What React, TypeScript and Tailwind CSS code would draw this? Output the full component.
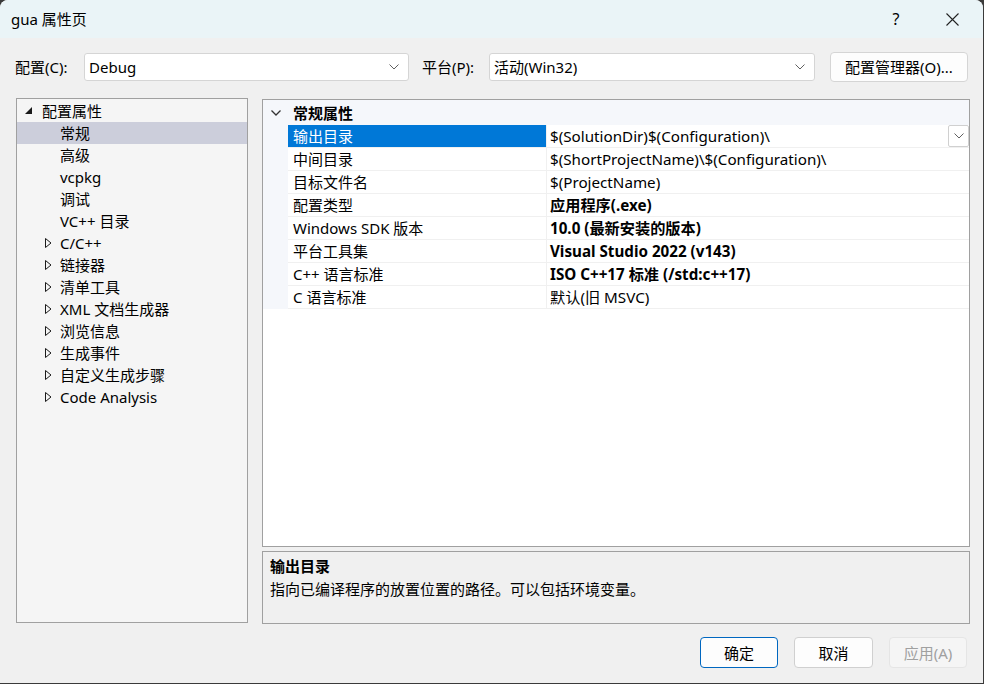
import { useState } from "react";

const font = { fontFamily: '"Noto Sans", "Noto Sans CJK SC", sans-serif' };

const Chevron = ({ className = "" }: { className?: string }) => (
  <svg width="10" height="6" viewBox="0 0 10 6" className={className}>
    <path d="M0.5 0.5 L5 5 L9.5 0.5" fill="none" stroke="#606060" strokeWidth="1" />
  </svg>
);

const treeChildren = ["常规", "高级", "vcpkg", "调试", "VC++ 目录"];
const treeCollapsed = [
  "C/C++",
  "链接器",
  "清单工具",
  "XML 文档生成器",
  "浏览信息",
  "生成事件",
  "自定义生成步骤",
  "Code Analysis",
];

const props: { name: string; value: string; bold?: boolean }[] = [
  { name: "输出目录", value: "$(SolutionDir)$(Configuration)\\" },
  { name: "中间目录", value: "$(ShortProjectName)\\$(Configuration)\\" },
  { name: "目标文件名", value: "$(ProjectName)" },
  { name: "配置类型", value: "应用程序(.exe)", bold: true },
  { name: "Windows SDK 版本", value: "10.0 (最新安装的版本)", bold: true },
  { name: "平台工具集", value: "Visual Studio 2022 (v143)", bold: true },
  { name: "C++ 语言标准", value: "ISO C++17 标准 (/std:c++17)", bold: true },
  { name: "C 语言标准", value: "默认(旧 MSVC)" },
];

function Select({ value, width }: { value: string; width: string }) {
  return (
    <div
      className={`${width} h-[28px] bg-white border border-[#d5d5d5] rounded-[3px] flex items-center justify-between pl-[4px] pr-[9px]`}
    >
      <span className="text-[15px] text-black">{value}</span>
      <Chevron />
    </div>
  );
}

export default function App() {
  const [selectedTree] = useState("常规");
  const [selectedProp] = useState(0);

  return (
    <div className="w-[984px] h-[684px] bg-[#3a3a3a]" style={font}>
      <div className="w-[983px] h-[683px] bg-[#f0f0f0] rounded-tl-[8px] rounded-tr-[8px] overflow-hidden flex flex-col text-[15px] text-black leading-[20px]">
        {/* title bar */}
        <div className="h-[38px] bg-[#eaf4f7] flex items-center pl-[11px] shrink-0">
          <span className="flex-1">gua 属性页</span>
          <span className="w-[56px] text-center text-[16px]">?</span>
          <span className="w-[56px] flex justify-center mr-[3px]">
            <svg width="13" height="13" viewBox="0 0 13 13">
              <path d="M0.5 0.5 L12.5 12.5 M12.5 0.5 L0.5 12.5" stroke="#222" strokeWidth="1.1" />
            </svg>
          </span>
        </div>

        {/* config row */}
        <div className="flex items-center mt-[14px] h-[30px] pl-[15px]">
          <span className="w-[69px]">配置(C):</span>
          <Select value="Debug" width="w-[325px]" />
          <span className="ml-[13px] w-[67px]">平台(P):</span>
          <Select value="活动(Win32)" width="w-[326px]" />
          <button className="ml-[15px] w-[138px] h-[30px] bg-[#fdfdfd] border border-[#d5d5d5] rounded-[4px] text-[15px]">
            配置管理器(O)...
          </button>
        </div>

        {/* main */}
        <div className="flex mt-[16px] pl-[16px] gap-[14px] h-[526px]">
          {/* tree */}
          <div className="w-[232px] h-[525px] bg-[#f5f5f5] border border-[#a0a0a0] pt-[1px]">
            <div className="h-[22px] flex items-center pl-[8px]">
              <svg width="8" height="8" viewBox="0 0 8 8" className="mr-[9px]">
                <path d="M7 0 L7 7 L0 7 Z" fill="#1a1a1a" />
              </svg>
              <span>配置属性</span>
            </div>
            {treeChildren.map((t) => (
              <div
                key={t}
                className={`h-[22px] flex items-center pl-[43px] ${
                  t === selectedTree ? "bg-[#cccedb]" : ""
                }`}
              >
                {t}
              </div>
            ))}
            {treeCollapsed.map((t) => (
              <div key={t} className="h-[22px] flex items-center pl-[28px]">
                <svg width="7" height="10" viewBox="0 0 7 10" className="mr-[8px]">
                  <path d="M0.5 0.5 L6 5 L0.5 9.5 Z" fill="none" stroke="#1a1a1a" strokeWidth="1" />
                </svg>
                <span>{t}</span>
              </div>
            ))}
          </div>

          {/* right */}
          <div className="w-[708px] mt-[1px] flex flex-col gap-[4px]">
            <div className="h-[448px] bg-white border border-[#a0a0a0] flex flex-col">
              <div className="h-[25px] bg-[#f5f7fb] flex items-center">
                <span className="w-[25px] flex justify-center">
                  <svg width="10" height="6" viewBox="0 0 10 6">
                    <path d="M0.5 0.5 L5 5 L9.5 0.5" fill="none" stroke="#333" strokeWidth="1.3" />
                  </svg>
                </span>
                <span className="font-bold pl-[5px]">常规属性</span>
              </div>
              {props.map((p, i) => (
                <div key={p.name} className="h-[23px] flex">
                  <div className="w-[25px] bg-[#f5f7fb]" />
                  <div
                    className={`w-[259px] pl-[5px] flex items-center border-b border-r border-[#f0f0f0] ${
                      i === selectedProp ? "bg-[#0078d7] text-white" : ""
                    }`}
                  >
                    {p.name}
                  </div>
                  <div className="flex-1 flex items-center justify-between pl-[3px] border-b border-[#f0f0f0]">
                    <span className={`text-[15.2px] ${p.bold ? "font-bold" : ""}`}>{p.value}</span>
                    {i === selectedProp && (
                      <span className="w-[21px] h-[22px] bg-white border border-[#d0d0d0] rounded-[2px] flex items-center justify-center">
                        <Chevron />
                      </span>
                    )}
                  </div>
                </div>
              ))}
            </div>
            <div className="h-[73px] bg-[#f0f0f0] border border-[#a0a0a0] px-[7px] pt-[2px]">
              <div className="font-bold h-[23px] flex items-center">输出目录</div>
              <div className="h-[23px] flex items-center">指向已编译程序的放置位置的路径。可以包括环境变量。</div>
            </div>
          </div>
        </div>

        {/* buttons */}
        <div className="flex justify-end gap-[16px] mt-[13px] pr-[16px]">
          <button className="w-[78px] h-[31px] bg-[#fdfdfd] border-[1.5px] border-[#0067c0] rounded-[4px] text-[15px]">
            确定
          </button>
          <button className="w-[79px] h-[31px] bg-[#fdfdfd] border border-[#d0d0d0] rounded-[4px] text-[15px]">
            取消
          </button>
          <button className="w-[78px] h-[31px] bg-[#f5f5f5] border border-[#e5e5e5] rounded-[4px] text-[15px] text-[#a0a0a0]">
            应用(A)
          </button>
        </div>
      </div>
    </div>
  );
}
